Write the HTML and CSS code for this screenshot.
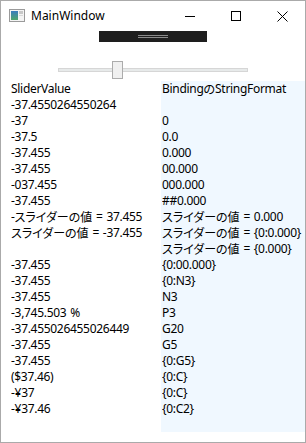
FILE: index.html
```html
<!DOCTYPE html>
<html>
<head>
<meta charset="utf-8">
<link rel="stylesheet" href="styles.css">
</head>
<body>
<div class="window">
  <div class="titlebar">
    <svg class="appicon" width="16" height="13" viewBox="0 0 16 13">
      <defs>
        <linearGradient id="g" x1="0" y1="0" x2="0" y2="1">
          <stop offset="0" stop-color="#3a7cc0"/>
          <stop offset="1" stop-color="#4fa56a"/>
        </linearGradient>
      </defs>
      <rect x="0.5" y="0.5" width="15" height="12" fill="#f4f4f4" stroke="#9a9a9a"/>
      <rect x="2" y="2" width="7" height="9" fill="url(#g)"/>
      <rect x="10" y="2" width="4" height="3" fill="#c8c8c8"/>
      <rect x="10" y="6" width="4" height="1" fill="#d8d8d8"/>
    </svg>
    <span class="title">MainWindow</span>
    <div class="controls">
      <div class="ctl"><svg width="10" height="10" viewBox="0 0 10 10"><line x1="0" y1="5.5" x2="10" y2="5.5" stroke="#000" stroke-width="1"/></svg></div>
      <div class="ctl"><svg width="10" height="10" viewBox="0 0 10 10"><rect x="0.5" y="0.5" width="9" height="9" fill="none" stroke="#000" stroke-width="1"/></svg></div>
      <div class="ctl"><svg width="11" height="11" viewBox="0 0 11 11"><path d="M0.5 0.5 L10.5 10.5 M10.5 0.5 L0.5 10.5" stroke="#000" stroke-width="1"/></svg></div>
    </div>
  </div>
  <div class="content">
    <div class="devbar"><div class="grip"></div></div>
    <div class="slider">
      <div class="track"><div class="thumb"></div></div>
    </div>
    <div class="grid">
      <div class="col left">
        <div class="row">SliderValue</div>
        <div class="row">-37.4550264550264</div>
        <div class="row">-37</div>
        <div class="row">-37.5</div>
        <div class="row">-37.455</div>
        <div class="row">-37.455</div>
        <div class="row">-037.455</div>
        <div class="row">-37.455</div>
        <div class="row">-<span class="ja">スライダーの値</span> = 37.455</div>
        <div class="row"><span class="ja">スライダーの値</span> = -37.455</div>
        <div class="row"></div>
        <div class="row">-37.455</div>
        <div class="row">-37.455</div>
        <div class="row">-37.455</div>
        <div class="row">-3,745.503 %</div>
        <div class="row">-37.455026455026449</div>
        <div class="row">-37.455</div>
        <div class="row">-37.455</div>
        <div class="row">($37.46)</div>
        <div class="row">-¥37</div>
        <div class="row">-¥37.46</div>
      </div>
      <div class="col right">
        <div class="row">Binding<span class="ja">の</span>StringFormat</div>
        <div class="row"></div>
        <div class="row">0</div>
        <div class="row">0.0</div>
        <div class="row">0.000</div>
        <div class="row">00.000</div>
        <div class="row">000.000</div>
        <div class="row">##0.000</div>
        <div class="row"><span class="ja">スライダーの値</span> = 0.000</div>
        <div class="row"><span class="ja">スライダーの値</span> = {0:0.000}</div>
        <div class="row"><span class="ja">スライダーの値</span> = {0.000}</div>
        <div class="row">{0:00.000}</div>
        <div class="row">{0:N3}</div>
        <div class="row">N3</div>
        <div class="row">P3</div>
        <div class="row">G20</div>
        <div class="row">G5</div>
        <div class="row">{0:G5}</div>
        <div class="row">{0:C}</div>
        <div class="row">{0:C}</div>
        <div class="row">{0:C2}</div>
      </div>
    </div>
  </div>
</div>
</body>
</html>
```

FILE: styles.css
```css
html, body {
  margin: 0;
  padding: 0;
  background: #fff;
}
.window {
  width: 306px;
  height: 443px;
  box-sizing: border-box;
  border: 1px solid #aaaaaa;
  display: flex;
  flex-direction: column;
  font-family: "Noto Sans", "Noto Sans CJK JP", sans-serif;
  font-size: 12px;
  color: #000;
  background: #fff;
}
.titlebar {
  height: 30px;
  display: flex;
  align-items: center;
  flex-shrink: 0;
}
.appicon {
  margin-left: 8px;
  margin-top: -1px;
}
.title {
  margin-left: 6px;
  font-size: 12px;
  line-height: 16px;
}
.controls {
  margin-left: auto;
  display: flex;
  height: 30px;
}
.ctl {
  width: 46px;
  height: 30px;
  display: flex;
  align-items: center;
  justify-content: center;
}
.content {
  flex: 1;
  display: flex;
  flex-direction: column;
  min-height: 0;
}
.devbar {
  align-self: center;
  width: 108px;
  height: 11px;
  background: #1e1e1e;
  display: flex;
  align-items: center;
  justify-content: center;
}
.grip {
  width: 30px;
  height: 1px;
  border-top: 1px solid #8a8a8a;
  border-bottom: 1px solid #8a8a8a;
}
.slider {
  display: flex;
  justify-content: center;
  padding-top: 26px;
  height: 13px;
}
.track {
  position: relative;
  width: 190px;
  height: 4px;
  box-sizing: border-box;
  background: #e7eaea;
  border: 1px solid #d6d6d6;
}
.thumb {
  position: absolute;
  left: 53px;
  top: -8px;
  width: 11px;
  height: 18px;
  box-sizing: border-box;
  background: #f0f0f0;
  border: 1px solid #acacac;
}
.grid {
  flex: 1;
  display: grid;
  grid-template-columns: 150px 1fr;
  margin: 0 0 10px 10px;
}
.col {
  display: flex;
  flex-direction: column;
}
.right {
  background: #f0f8ff;
  padding-left: 1px;
}
.row {
  height: 16px;
  line-height: 16px;
  white-space: nowrap;
  letter-spacing: -0.3px;
  word-spacing: 1px;
  overflow: hidden;
}
.ja {
  display: inline-block;
  height: 16px;
  line-height: 16px;
  vertical-align: top;
  overflow: hidden;
  font-family: "Noto Sans CJK JP", sans-serif;
  font-feature-settings: "palt";
  font-size: 12px;
  letter-spacing: 0;
}
```
